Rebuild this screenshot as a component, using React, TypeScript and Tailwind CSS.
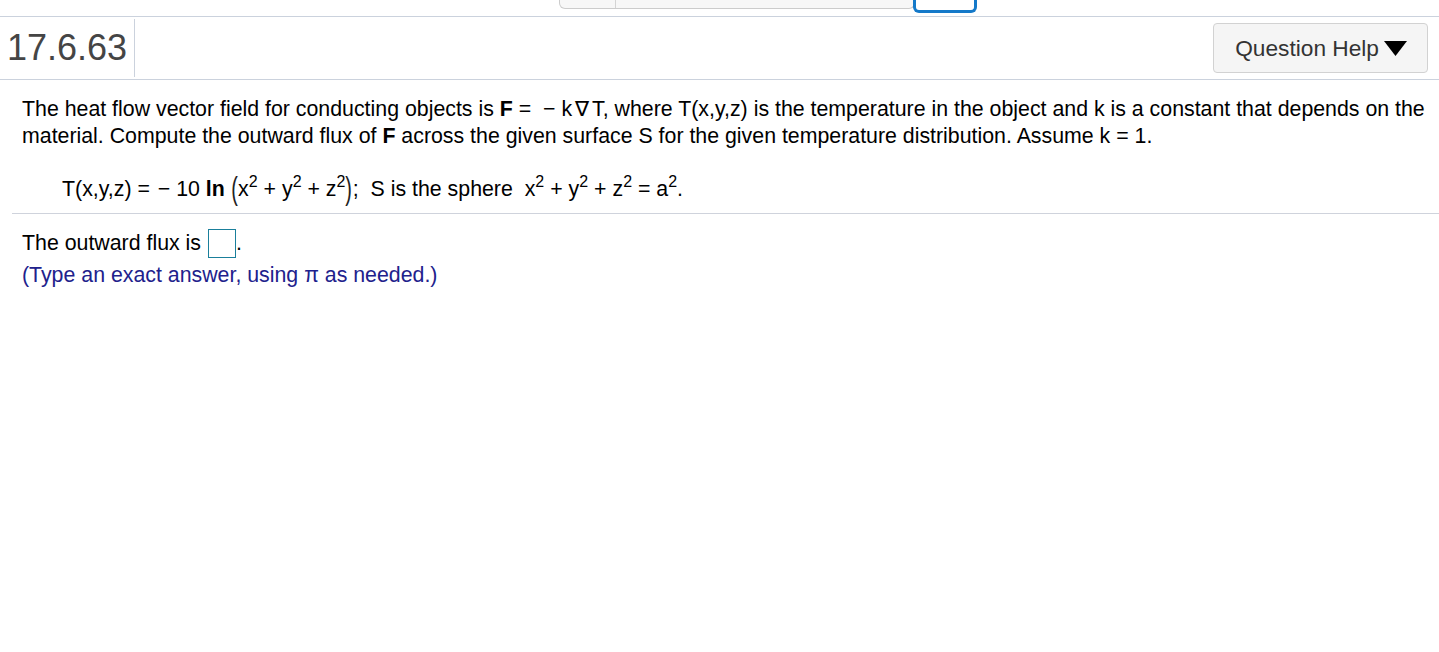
import React from "react"

function Sup({ children }: { children: React.ReactNode }) {
  return <sup className="text-[16px] relative -top-[1px] align-super leading-none">{children}</sup>
}

function Paren({ children }: { children: React.ReactNode }) {
  return <span className="inline-block text-[22px] leading-none scale-y-[1.45] scale-x-[0.9] text-[#222]">{children}</span>
}

export default function App() {
  return (
    <div className="min-h-[652px] bg-white text-black" style={{ fontFamily: '"Liberation Sans", Arial, sans-serif' }}>
      {/* cropped toolbar */}
      <div className="h-4 flex items-start pl-[559px] overflow-hidden">
        <div className="flex h-[9px] w-[356px] border-x border-b border-[#cccccc] rounded-b-md bg-[#f7f7f7]">
          <div className="w-[56px] border-r border-[#d4d4d4]" />
        </div>
        <div className="h-[13px] w-[64px] -ml-[2px] border-x-[3px] border-b-[3px] border-[#1479c9] rounded-b-md bg-white" />
      </div>

      {/* HEADER */}
      <div className="flex items-center justify-between h-16 border-y border-[#cbd2dd]">
        <div className="h-[58px] flex items-center pl-[7px] pr-2 w-[135px] border-r border-[#cbd2dd] text-[36px] text-[#454545]">
          17.6.63
        </div>
        <button className="mr-[11px] h-[50px] pl-[21px] pr-[20px] flex items-center gap-[5px] rounded border border-[#d2d2d2] bg-[#f5f5f5] text-[22.7px] text-[#333333]">
          Question Help
          <svg width="23" height="16" viewBox="0 0 23 16" className="mt-[2px]">
            <polygon points="0,0 23,0 11.5,15" fill="#000" />
          </svg>
        </button>
      </div>

      {/* QUESTION */}
      <div className="pl-[22px] pr-3 pt-[16px] text-[21.33px] leading-[26.67px]">
        <p>
          The heat flow vector field for conducting objects is <b>F</b> = &nbsp;− k<span className="mx-[3px]">∇</span>T, where T(x,y,z)
          is the temperature in the object and k is a constant that depends on the material. Compute the outward flux of <b>F</b>{" "}
          across the given surface S for the given temperature distribution. Assume k = 1.
        </p>
        <p className="pl-10 mt-[20px] leading-[40px] whitespace-nowrap">
          T(x,y,z) = <span className="ml-[2px]">−</span> 10 <b>ln</b>{" "}
          <Paren>(</Paren>x<Sup>2</Sup> + y<Sup>2</Sup> + z<Sup>2</Sup>
          <Paren>)</Paren>; &nbsp;S is the sphere &nbsp;x<Sup>2</Sup> + y<Sup>2</Sup> + z<Sup>2</Sup> = a<Sup>2</Sup>.
        </p>
      </div>
      <div className="ml-3 mt-[4px] border-t border-[#cfd3dc]" />

      {/* ANSWER */}
      <div className="pl-[22px] pt-[15px] text-[21.33px]">
        <div className="flex items-center h-[29px]">
          The outward flux is
          <span className="ml-[7px] w-[28px] h-[29px] border border-[#1a7f9b] inline-block" />
          <span>.</span>
        </div>
        <div className="mt-[4px] text-[#21218c] leading-[26.67px]">(Type an exact answer, using π as needed.)</div>
      </div>
    </div>
  )
}
